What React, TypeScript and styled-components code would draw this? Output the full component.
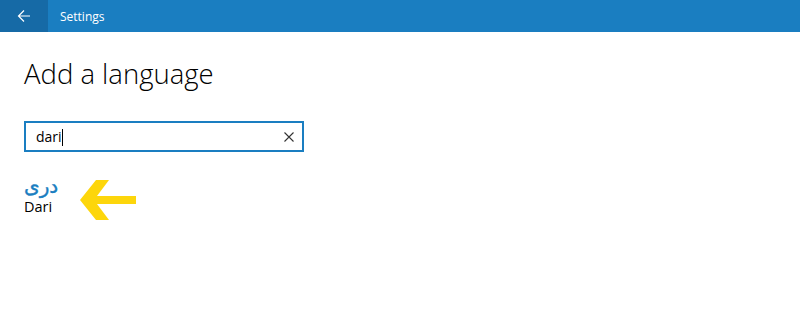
import React from 'react';
import styled, {createGlobalStyle} from 'styled-components';

const GlobalStyle = createGlobalStyle`
  html, body {
    margin: 0;
    padding: 0;
    background: #ffffff;
  }
  body {
    font-family: "Open Sans", "Noto Sans", sans-serif;
    color: #000000;
  }
`;

const Page = styled.div`
  width: 800px;
  height: 319px;
  background: #ffffff;
  overflow: hidden;
`;

const TitleBar = styled.div`
  display: flex;
  align-items: center;
  height: 32px;
  background: #1a7ec1;
  color: #ffffff;
`;

const BackButton = styled.div`
  display: flex;
  align-items: center;
  justify-content: center;
  width: 48px;
  height: 32px;
  background: #166aa6;
`;

const TitleText = styled.div`
  margin-left: 12px;
  font-size: 12px;
`;

const Content = styled.div`
  padding: 0 24px;
`;

const Heading = styled.h1`
  margin: 24px 0 0;
  font-size: 27.5px;
  font-weight: 300;
  line-height: 36px;
  color: #000000;
`;

const SearchBox = styled.div`
  display: flex;
  align-items: center;
  box-sizing: border-box;
  width: 280px;
  height: 31px;
  margin-top: 29px;
  padding: 0 8px 0 10px;
  border: 2px solid #1a7ec1;
`;

const SearchText = styled.div`
  flex: 1;
  font-size: 14px;
  color: #000000;
`;

const Caret = styled.span`
  display: inline-block;
  width: 1px;
  height: 17px;
  background: #000000;
  vertical-align: -4px;
`;

const ResultRow = styled.div`
  display: flex;
  align-items: flex-start;
  margin-top: 22px;
  gap: 14px;
`;

const Result = styled.div`
  display: flex;
  flex: none;
  width: 40px;
  flex-direction: column;
  align-items: flex-start;
`;

const NativeName = styled.div`
  font-family: "DejaVu Sans", sans-serif;
  font-size: 20px;
  line-height: 24px;
  color: #1a7ec1;
  -webkit-text-stroke: 0.4px #1a7ec1;
`;

const EnglishName = styled.div`
  font-size: 14.5px;
  line-height: 18px;
  color: #000000;
`;

const ArrowWrap = styled.div`
  margin-top: 5px;
`;

export default function App() {
  return (
    <>
      <GlobalStyle />
      <Page>
        <TitleBar>
          <BackButton>
            <svg width="14" height="14" viewBox="0 0 14 14">
              <path d="M13 7H1.5M7 1.5L1.5 7L7 12.5" stroke="#ffffff" strokeWidth="1.2" fill="none" />
            </svg>
          </BackButton>
          <TitleText>Settings</TitleText>
        </TitleBar>
        <Content>
          <Heading>Add a language</Heading>
          <SearchBox>
            <SearchText>dari<Caret /></SearchText>
            <svg width="10" height="10" viewBox="0 0 10 10">
              <path d="M0.5 0.5L9.5 9.5M9.5 0.5L0.5 9.5" stroke="#333333" strokeWidth="1.1" fill="none" />
            </svg>
          </SearchBox>
          <ResultRow>
            <Result>
              <NativeName dir="rtl">دری</NativeName>
              <EnglishName>Dari</EnglishName>
            </Result>
            <ArrowWrap>
              <svg width="60" height="42" viewBox="0 0 60 42">
                <path d="M18 1H31L19 17H58V25H19L31 41H18L2 21Z" fill="#fdd60b" />
              </svg>
            </ArrowWrap>
          </ResultRow>
        </Content>
      </Page>
    </>
  );
}
